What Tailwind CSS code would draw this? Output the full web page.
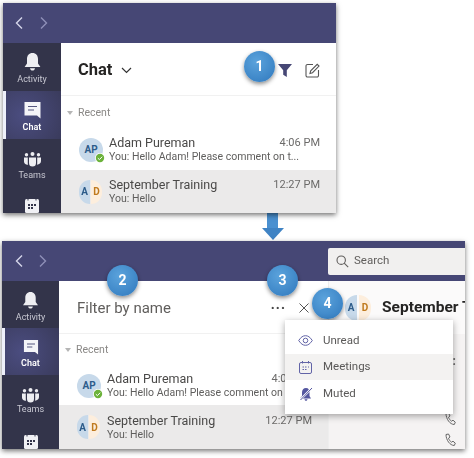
<!DOCTYPE html>
<html lang="en">
<head>
  <meta charset="UTF-8">
  <meta name="viewport" content="width=device-width, initial-scale=1">
  <title>Chat filter steps</title>
  <script src="https://cdn.jsdelivr.net/npm/@tailwindcss/browser@4"></script>
</head>
<body class="bg-white w-[474px] h-[458px] overflow-hidden font-['Roboto',sans-serif] text-[#3b3a39]">
<div class="blur-[0.35px]">

  <!-- Top window -->
  <div class="relative ml-[3px] mt-[3px] w-[333px] h-[210px] bg-white flex flex-col overflow-hidden shadow-[0_2px_5px_rgba(0,0,0,0.55)]">
    <div class="h-[40px] shrink-0 bg-[#464775] flex items-center pl-[11px] gap-[15px]">
      <svg class="w-[10px] h-[14px]" viewBox="0 0 10 14" fill="none" stroke="#d5d6ea" stroke-width="1.400"><path d="M8 1.500 2.500 7 8 12.500"/></svg>
      <svg class="w-[10px] h-[14px]" viewBox="0 0 10 14" fill="none" stroke="#8f90b8" stroke-width="1.400"><path d="M2 1.500 7.500 7 2 12.500"/></svg>
    </div>
    <div class="flex flex-1 min-h-0">
      <!-- Rail -->
      <div class="w-[58px] shrink-0 bg-[#33344a] flex flex-col text-[9px] text-center">
        <div class="h-[48px] flex flex-col items-center pt-[10px] text-[#c8c8d2]">
          <svg class="w-[17px] h-[19px]" viewBox="0 0 17 19" fill="#eeeef2"><path d="M8.500 0C5 0 3 2.600 3 6v4.500L.6 14h15.800L14 10.500V6c0-3.400-2-6-5.500-6zM6 15.200h5c-.3 1.500-1.200 2.300-2.500 2.300S6.300 16.700 6 15.200z"/></svg>
          <span class="mt-[1px] leading-[12px]">Activity</span>
        </div>
        <div class="relative h-[49px] flex flex-col items-center pt-[11px] text-white font-semibold bg-[radial-gradient(circle_at_35%_50%,#4b4d80,#3a3b5c)]">
          <span class="absolute left-0 top-0 bottom-0 w-[3px] bg-[#eef0fa]"></span>
          <svg class="w-[17px] h-[17px]" viewBox="0 0 17 17"><path d="M.5 0h16v16.500L13 13.500H.5z" fill="#f4f4f8"/><path d="M4 4.500h9M4 8h6" stroke="#55567f" stroke-width="1.200"/></svg>
          <span class="mt-[2px] leading-[12px]">Chat</span>
        </div>
        <div class="h-[48px] flex flex-col items-center pt-[13px] text-[#c8c8d2]">
          <svg class="w-[19px] h-[15px]" viewBox="0 0 19 15" fill="#eeeef2"><circle cx="9.500" cy="2" r="2"/><circle cx="3.500" cy="2.800" r="1.700"/><circle cx="15.500" cy="2.800" r="1.700"/><path d="M6 5.500h7v5.500a3.500 3.500 0 0 1-7 0zM1 5.500h3.800v5.500q0 1.200.3 1.800C2.500 13 1 11.500 1 9.500zM18 5.500h-3.800v5.500q0 1.200-.3 1.800c2.600-.3 4.100-1.800 4.100-3.800z"/></svg>
          <span class="mt-[2px] leading-[12px]">Teams</span>
        </div>
        <div class="flex justify-center pt-[12px]">
          <svg class="w-[14px] h-[14px]" viewBox="0 0 14 14"><rect width="14" height="14" rx="1.500" fill="#f0f0f4"/><path d="M3 5h2v2H3zM6 5h2v2H6zM9 5h2v2H9zM3 8h2v2H3zM6 8h2v2H6z" fill="#33344a"/><path d="M3-.5v2M11-.5v2" stroke="#33344a"/></svg>
        </div>
      </div>
      <!-- List -->
      <div class="flex-1 min-w-0 flex flex-col">
        <div class="h-[53px] shrink-0 border-b border-[#f1f1f1] flex items-center pt-[3px] pl-[17px] pr-[16px]">
          <span class="text-[16.500px] font-bold text-[#252423] leading-none">Chat</span>
          <svg class="ml-[9px] w-[11px] h-[7px]" viewBox="0 0 11 7" fill="none" stroke="#333" stroke-width="1.200"><path d="M1 1l4.500 4.500L10 1"/></svg>
          <svg class="ml-auto w-[14px] h-[13px]" viewBox="0 0 14 13" fill="#464775"><path d="M0 0h14L8.800 6.200V13L5.200 10.800V6.200z"/></svg>
          <svg class="ml-[13px] w-[15px] h-[15px]" viewBox="0 0 15 15" fill="none" stroke="#555" stroke-width="1.100"><path d="M8 1.500H2.500a1.500 1.500 0 0 0-1.500 1.500v9.500A1.500 1.500 0 0 0 2.500 14H12a1.500 1.500 0 0 0 1.500-1.500V7"/><path d="M5 10.500l.7-2.700L12.200 1.300l1.800 1.800L7.500 9.700z"/></svg>
        </div>
        <div class="h-[33px] shrink-0 flex items-center pl-[6px] text-[10.500px] text-[#8a8886]">
          <svg class="w-[6px] h-[4px] mr-[5px]" viewBox="0 0 6 4" fill="#b5b5b5"><path d="M0 0h6L3 4z"/></svg>Recent
        </div>
        <div class="h-[41px] shrink-0 flex items-center pl-[18px] pr-[16px]">
          <div class="relative w-[24px] h-[24px] rounded-full bg-[#c7d9ea] text-[#2d5c8a] text-[10px] font-bold flex items-center justify-center shrink-0">AP
            <svg class="absolute -right-[2px] -bottom-[1px] w-[10px] h-[10px]" viewBox="0 0 10 10"><circle cx="5" cy="5" r="5" fill="#fff"/><circle cx="5" cy="5" r="4.200" fill="#6bb23a"/><path d="M2.800 5.100 4.400 6.600 7.200 3.700" fill="none" stroke="#fff" stroke-width="1"/></svg>
          </div>
          <div class="ml-[6px] flex-1 min-w-0">
            <div class="flex justify-between text-[12.500px] leading-[15px] text-[#4a4948]"><span>Adam Pureman</span><span class="text-[11px] text-[#6b6a69]">4:06 PM</span></div>
            <div class="text-[10.500px] leading-[14px] text-[#5f5e5d] whitespace-nowrap">You: Hello Adam! Please comment on t...</div>
          </div>
        </div>
        <div class="flex-1 bg-[#ebeaea] flex items-center pl-[18px] pr-[16px]">
          <div class="relative w-[24px] h-[24px] shrink-0 flex text-[10px] font-bold">
            <span class="w-[11px] rounded-l-full bg-[#c7d9ea] text-[#2d5c8a] flex items-center justify-center">A</span>
            <span class="w-[11px] ml-[1px] rounded-r-full bg-[#fdeedd] text-[#c07a1e] flex items-center justify-center">D</span>
          </div>
          <div class="ml-[6px] flex-1 min-w-0">
            <div class="flex justify-between text-[12.500px] leading-[15px] text-[#4a4948]"><span>September Training</span><span class="text-[11px] text-[#6b6a69]">12:27 PM</span></div>
            <div class="text-[10.500px] leading-[14px] text-[#5f5e5d]">You: Hello</div>
          </div>
        </div>
      </div>
    </div>
    <span class="absolute left-[241px] top-[48px] w-[31px] h-[31px] rounded-full bg-[radial-gradient(circle_at_40%_35%,#5ba3dc,#2f78bd)] text-white text-[14px] font-bold flex items-center justify-center shadow-[0_2px_4px_rgba(0,0,0,0.45)]">1</span>
  </div>

  <!-- Arrow -->
  <div class="ml-[261px] w-[23px] h-[28px] flex flex-col items-center">
    <div class="w-[11px] h-[15px] bg-[#4a90d0]"></div>
    <div class="w-0 h-0 border-x-[11.500px] border-x-transparent border-t-[12px] border-t-[#3f83c4]"></div>
  </div>

  <!-- Bottom window -->
  <div class="relative ml-[2px] w-[463px] h-[208px] bg-white flex flex-col shadow-[0_2px_5px_rgba(0,0,0,0.55)]">
    <div class="h-[40px] shrink-0 bg-[#464775] flex items-center pl-[12px] gap-[14px]">
      <svg class="w-[10px] h-[14px]" viewBox="0 0 10 14" fill="none" stroke="#d5d6ea" stroke-width="1.400"><path d="M8 1.500 2.500 7 8 12.500"/></svg>
      <svg class="w-[10px] h-[14px]" viewBox="0 0 10 14" fill="none" stroke="#8f90b8" stroke-width="1.400"><path d="M2 1.500 7.500 7 2 12.500"/></svg>
      <div class="ml-auto w-[137px] h-[27px] bg-[#f1f0ef] rounded-l-[2px] flex items-center pl-[8px] text-[11.500px] text-[#605e5c]">
        <svg class="w-[13px] h-[13px] mr-[5px]" viewBox="0 0 13 13" fill="none" stroke="#605e5c" stroke-width="1.100"><circle cx="5.200" cy="5.200" r="4.200"/><path d="M8.200 8.200l4 4"/></svg>Search
      </div>
    </div>
    <div class="flex flex-1 min-h-0">
      <div class="w-[57px] shrink-0 bg-[#33344a] flex flex-col text-[9px] text-center overflow-hidden">
        <div class="h-[47px] flex flex-col items-center pt-[11px] text-[#c8c8d2]">
          <svg class="w-[17px] h-[18px]" viewBox="0 0 17 19" fill="#eeeef2"><path d="M8.500 0C5 0 3 2.600 3 6v4.500L.6 14h15.800L14 10.500V6c0-3.400-2-6-5.500-6zM6 15.200h5c-.3 1.500-1.200 2.300-2.500 2.300S6.300 16.700 6 15.200z"/></svg>
          <span class="mt-[1px] leading-[12px]">Activity</span>
        </div>
        <div class="relative h-[47px] flex flex-col items-center pt-[12px] text-white font-semibold bg-[radial-gradient(circle_at_35%_50%,#4b4d80,#3a3b5c)]">
          <span class="absolute left-0 top-0 bottom-0 w-[3px] bg-[#eef0fa]"></span>
          <svg class="w-[16px] h-[15px]" viewBox="0 0 17 17"><path d="M.5 0h16v16.500L13 13.500H.5z" fill="#f4f4f8"/><path d="M4 4.500h9M4 8h6" stroke="#55567f" stroke-width="1.200"/></svg>
          <span class="mt-[2px] leading-[12px]">Chat</span>
        </div>
        <div class="h-[47px] flex flex-col items-center pt-[13px] text-[#c8c8d2]">
          <svg class="w-[19px] h-[15px]" viewBox="0 0 19 15" fill="#eeeef2"><circle cx="9.500" cy="2" r="2"/><circle cx="3.500" cy="2.800" r="1.700"/><circle cx="15.500" cy="2.800" r="1.700"/><path d="M6 5.500h7v5.500a3.500 3.500 0 0 1-7 0zM1 5.500h3.800v5.500q0 1.200.3 1.800C2.500 13 1 11.500 1 9.500zM18 5.500h-3.800v5.500q0 1.200-.3 1.800c2.600-.3 4.100-1.800 4.100-3.800z"/></svg>
          <span class="leading-[12px]">Teams</span>
        </div>
        <div class="flex justify-center pt-[13px]">
          <svg class="w-[14px] h-[14px]" viewBox="0 0 14 14"><rect width="14" height="14" rx="1.500" fill="#f0f0f4"/><path d="M3 5h2v2H3zM6 5h2v2H6zM9 5h2v2H9zM3 8h2v2H3zM6 8h2v2H6z" fill="#33344a"/><path d="M3-.5v2M11-.5v2" stroke="#33344a"/></svg>
        </div>
      </div>
      <div class="w-[270px] shrink-0 flex flex-col border-r border-[#eeeeee]">
        <div class="h-[53px] shrink-0 border-b border-[#f1f1f1] flex items-center pt-[2px] pl-[18px] pr-[19px]">
          <span class="text-[15px] text-[#605e5c]">Filter by name</span>
          <span class="ml-auto mr-[13px] mb-[9px] text-[14px] font-bold leading-none text-[#444] tracking-[1px]">...</span>
          <svg class="w-[10px] h-[10px]" viewBox="0 0 10 10" fill="none" stroke="#555" stroke-width="1"><path d="M.5.500l9 9M9.500.500l-9 9"/></svg>
        </div>
        <div class="h-[32px] shrink-0 flex items-center pl-[6px] text-[10.500px] text-[#8a8886]">
          <svg class="w-[6px] h-[4px] mr-[5px]" viewBox="0 0 6 4" fill="#b5b5b5"><path d="M0 0h6L3 4z"/></svg>Recent
        </div>
        <div class="h-[39px] shrink-0 flex items-center pl-[18px] pr-[16px]">
          <div class="relative w-[24px] h-[24px] rounded-full bg-[#c7d9ea] text-[#2d5c8a] text-[10px] font-bold flex items-center justify-center shrink-0">AP
            <svg class="absolute -right-[2px] -bottom-[1px] w-[10px] h-[10px]" viewBox="0 0 10 10"><circle cx="5" cy="5" r="5" fill="#fff"/><circle cx="5" cy="5" r="4.200" fill="#6bb23a"/><path d="M2.800 5.100 4.400 6.600 7.200 3.700" fill="none" stroke="#fff" stroke-width="1"/></svg>
          </div>
          <div class="ml-[6px] flex-1 min-w-0">
            <div class="flex justify-between text-[12.500px] leading-[15px] text-[#4a4948]"><span>Adam Pureman</span><span class="text-[11px] text-[#6b6a69]">4:06 PM</span></div>
            <div class="text-[10.500px] leading-[14px] text-[#5f5e5d] whitespace-nowrap">You: Hello Adam! Please comment on t...</div>
          </div>
        </div>
        <div class="flex-1 bg-[#ebeaea] flex items-center pl-[18px] pr-[16px]">
          <div class="relative w-[24px] h-[24px] shrink-0 flex text-[10px] font-bold">
            <span class="w-[11px] rounded-l-full bg-[#c7d9ea] text-[#2d5c8a] flex items-center justify-center">A</span>
            <span class="w-[11px] ml-[1px] rounded-r-full bg-[#fdeedd] text-[#c07a1e] flex items-center justify-center">D</span>
          </div>
          <div class="ml-[6px] flex-1 min-w-0">
            <div class="flex justify-between text-[12.500px] leading-[15px] text-[#4a4948]"><span>September Training</span><span class="text-[11px] text-[#6b6a69]">12:27 PM</span></div>
            <div class="text-[10.500px] leading-[14px] text-[#5f5e5d]">You: Hello</div>
          </div>
        </div>
      </div>
      <!-- Conversation side -->
      <div class="flex-1 min-w-0 overflow-hidden bg-[#f5f3f3] flex flex-col">
        <div class="h-[53px] shrink-0 bg-[#fbfafa] flex items-center pl-[16px] whitespace-nowrap">
          <div class="w-[26px] h-[26px] shrink-0 flex text-[10px] font-bold">
            <span class="w-[12px] rounded-l-full bg-[#c7d9ea] text-[#2d5c8a] flex items-center justify-center">A</span>
            <span class="w-[12px] ml-[2px] rounded-r-full bg-[#fdeedd] text-[#c07a1e] flex items-center justify-center">D</span>
          </div>
          <span class="ml-[11px] text-[15.500px] font-bold text-[#252423]">September T</span>
        </div>
        <div class="flex-1 flex flex-col items-end pr-[9px] pb-[3px]">
          <span class="mt-[21px] text-[12px] font-bold leading-none text-[#666]">:</span>
          <svg class="mt-[45px] w-[11px] h-[13px]" viewBox="0 0 11 13" fill="none" stroke="#666" stroke-width="1"><path d="M1 1.500 3.500 1l1.500 3-1.500 1.200c.5 1.500 1.500 3 3 4l1.500-1 2.300 2-1 2.300C5 12.500 1 7 1 1.500z"/></svg>
          <svg class="mt-[8px] w-[11px] h-[13px]" viewBox="0 0 11 13" fill="none" stroke="#666" stroke-width="1"><path d="M1 1.500 3.500 1l1.500 3-1.500 1.200c.5 1.500 1.500 3 3 4l1.500-1 2.300 2-1 2.300C5 12.500 1 7 1 1.500z"/></svg>
        </div>
      </div>
    </div>

    <!-- Step badges -->
    <span class="absolute left-[105px] top-[24px] w-[31px] h-[31px] rounded-full bg-[radial-gradient(circle_at_40%_35%,#5ba3dc,#2f78bd)] text-white text-[14px] font-bold flex items-center justify-center shadow-[0_2px_4px_rgba(0,0,0,0.45)]">2</span>
    <span class="absolute left-[265px] top-[24px] w-[31px] h-[31px] rounded-full bg-[radial-gradient(circle_at_40%_35%,#5ba3dc,#2f78bd)] text-white text-[14px] font-bold flex items-center justify-center shadow-[0_2px_4px_rgba(0,0,0,0.45)]">3</span>
    <span class="absolute left-[310px] top-[47px] w-[31px] h-[31px] rounded-full bg-[radial-gradient(circle_at_40%_35%,#5ba3dc,#2f78bd)] text-white text-[14px] font-bold flex items-center justify-center shadow-[0_2px_4px_rgba(0,0,0,0.45)]">4</span>

    <!-- Filter menu -->
    <div class="absolute left-[283px] top-[79px] w-[168px] h-[94px] bg-white py-[7px] flex flex-col text-[11.500px] text-[#5a5958] shadow-[0_2px_7px_rgba(0,0,0,0.35)]">
      <div class="h-[27px] flex items-center pl-[13px]">
        <svg class="w-[15px] h-[11px] mr-[10px]" viewBox="0 0 15 11" fill="none" stroke="#6264a7" stroke-width="1"><path d="M.7 5.500C3 2 5 .7 7.500.7S12 2 14.300 5.500C12 9 10 10.300 7.500 10.300S3 9 .7 5.500z"/><circle cx="7.500" cy="5.500" r="2.300"/></svg>Unread
      </div>
      <div class="h-[27px] flex items-center pl-[14px] bg-[#f3f2f1]">
        <svg class="w-[13px] h-[13px] mr-[11px]" viewBox="0 0 13 13" fill="none" stroke="#6264a7" stroke-width="1"><rect x=".5" y="1.500" width="12" height="11" rx="1.500"/><path d="M3.500 0v2.500M9.500 0v2.500M3.500 6h1.500M6 6h1.500M9 6h1M3.500 8.500h1.500M6 8.500h1.500"/></svg>Meetings
      </div>
      <div class="h-[27px] flex items-center pl-[14px]">
        <svg class="w-[14px] h-[14px] mr-[10px]" viewBox="0 0 14 14" fill="#5557a0"><path d="M7 1C4.500 1 3 3 3 5.500V9L1 11.500h11L10.500 9V5.500C10.500 3 9.500 1 7 1zM5.500 12.200h3C8.200 13.300 7.700 13.700 7 13.700s-1.200-.4-1.500-1.500z"/><path d="M1 13 13 1" stroke="#fff" stroke-width="2.200"/><path d="M1.500 13 13 1" stroke="#5557a0" stroke-width="1"/></svg>Muted
      </div>
    </div>
  </div>
</div>
</body>
</html>
